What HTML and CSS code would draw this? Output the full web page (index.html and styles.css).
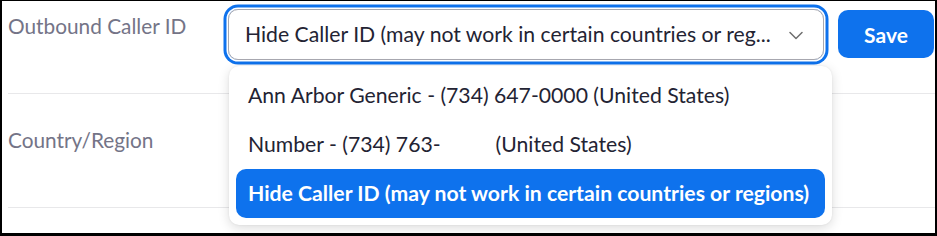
FILE: index.html
```html
<!DOCTYPE html>
<html lang="en">
<head>
  <meta charset="UTF-8" />
  <title>Outbound Caller ID</title>
  <link rel="stylesheet" href="styles.css">
</head>
<body>
  <div class="setting-row first">
    <label class="setting-label">Outbound Caller ID</label>
    <div class="setting-control">
      <div class="select focused">
        <span class="select-value">Hide Caller ID (may not work in certain countries or reg...</span>
        <svg class="chevron" width="14" height="9" viewBox="0 0 14 9">
          <path d="M1 1.5 L7 7.5 L13 1.5" fill="none" stroke="#6e6e6e" stroke-width="1.5" stroke-linecap="round" stroke-linejoin="round"/>
        </svg>
        <ul class="dropdown">
          <li class="option">Ann Arbor Generic - (734) 647-0000 (United States)</li>
          <li class="option">Number - (734) 763-<span class="masked"></span>(United States)</li>
          <li class="option selected">Hide Caller ID (may not work in certain countries or regions)</li>
        </ul>
      </div>
      <button class="save">Save</button>
    </div>
  </div>
  <div class="setting-row second">
    <label class="setting-label">Country/Region</label>
  </div>
</body>
</html>
```

FILE: styles.css
```css
html {
  background: #000;
}
body {
  margin: 0;
  height: 232px;
  border-style: solid;
  border-color: #000;
  border-width: 1px 2px 3px 2px;
  background: #fff;
  font-family: Lato, "Liberation Sans", sans-serif;
  color: #232333;
  overflow: hidden;
}
.setting-row {
  display: flex;
  align-items: flex-start;
  margin-left: 6px;
  border-bottom: 1px solid #e8e8ea;
}
.setting-row.first {
  height: 92px;
}
.setting-row.second {
  height: 113px;
}
.setting-label {
  width: 220px;
  font-size: 20.8px;
  line-height: 24px;
  color: #747487;
}
.first .setting-label {
  margin-top: 13px;
}
.second .setting-label {
  margin-top: 34px;
}
.setting-control {
  display: flex;
  align-items: flex-start;
  gap: 14px;
  margin-top: 8px;
}
.select {
  position: relative;
  box-sizing: border-box;
  width: 596px;
  height: 51px;
  border: 1px solid #a8a8b0;
  border-radius: 10px;
  padding: 12px 0 0 16px;
  font-size: 21.2px;
  line-height: 24px;
}
.select.focused {
  box-shadow: 0 0 0 1.5px #fff, 0 0 0 4.5px #0e72ed;
}
.select-value {
  display: block;
  width: 545px;
  white-space: nowrap;
  overflow: hidden;
}
.chevron {
  position: absolute;
  right: 20px;
  top: 21px;
}
.dropdown {
  position: absolute;
  left: 0;
  top: 56px;
  width: 603px;
  box-sizing: border-box;
  margin: 0;
  padding: 5px 7px 7px 7px;
  list-style: none;
  background: #fff;
  border-radius: 10px;
  box-shadow: 0 3px 12px rgba(0, 0, 0, 0.14), 0 0 2px rgba(0, 0, 0, 0.08);
  z-index: 2;
}
.option {
  height: 49px;
  line-height: 49px;
  padding-left: 12px;
  font-size: 21.2px;
  border-radius: 10px;
  white-space: nowrap;
}
.option.selected {
  background: #0e72ed;
  color: #fff;
  font-weight: bold;
}
.masked {
  display: inline-block;
  width: 55px;
}
.save {
  width: 96px;
  height: 48px;
  margin-top: 1px;
  border: none;
  border-radius: 10px;
  background: #0e72ed;
  color: #fff;
  font-family: Lato, "Liberation Sans", sans-serif;
  font-size: 21px;
  font-weight: bold;
  cursor: pointer;
}
```
